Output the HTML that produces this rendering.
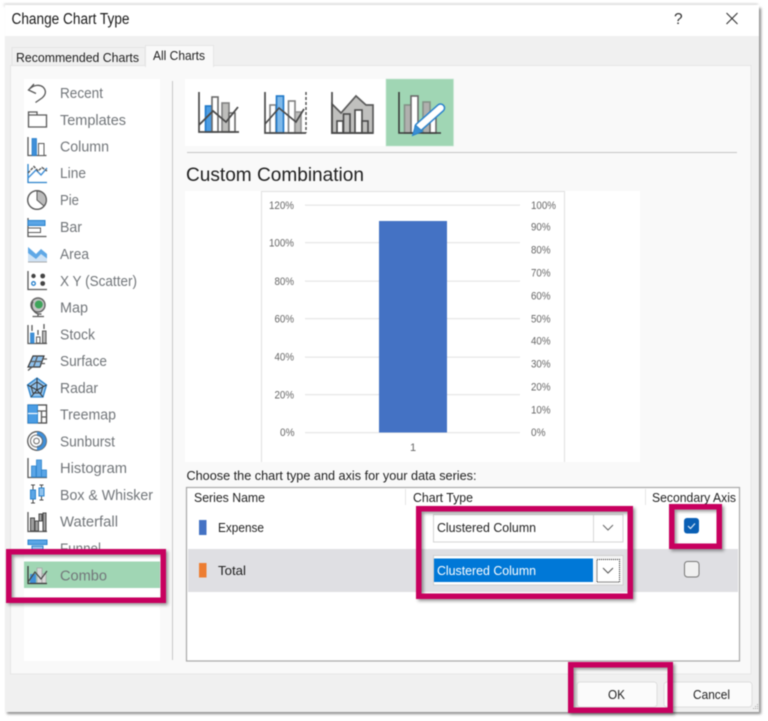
<!DOCTYPE html>
<html><head><meta charset="utf-8"><title>Change Chart Type</title>
<style>
html,body{margin:0;padding:0;background:#fff;width:768px;height:721px;overflow:hidden}
svg{display:block;filter:blur(.4px)}
text{font-family:"Liberation Sans",sans-serif}
.l{font-size:14.5px;fill:#72767a}
.a{font-size:11px;fill:#666}
.t{font-size:13px;fill:#1f1f1f}
.g{fill:none;stroke:#5a5a5a;stroke-width:1.300}
</style></head><body>
<svg width="768" height="721" viewBox="0 0 768 721" xmlns="http://www.w3.org/2000/svg">
<defs>
<filter id="ds" x="-5%" y="-5%" width="110%" height="110%"><feGaussianBlur stdDeviation="1.2"/></filter>
<filter id="ps" x="-20%" y="-20%" width="140%" height="140%"><feDropShadow dx="2" dy="2" stdDeviation="1.5" flood-color="#000" flood-opacity=".4"/></filter>
</defs>
<rect x="4" y="3" width="754" height="4" fill="#ddd" filter="url(#ds)"/>
<rect x="7" y="8" width="754" height="706" fill="#8a8a8a" filter="url(#ds)"/>
<rect x="5" y="5" width="754" height="707" fill="#f0f0f0"/>
<rect x="5" y="5" width="754" height="31" fill="#fff"/>
<text x="11.5" y="24" font-size="15.500" fill="#1a1a1a" textLength="118" lengthAdjust="spacingAndGlyphs">Change Chart Type</text>
<text x="674" y="24" font-size="15.500" fill="#333">?</text>
<path d="M726.500 13 L737.500 24 M737.500 13 L726.500 24" stroke="#333" stroke-width="1.100" fill="none"/>

<rect x="10.500" y="65.500" width="740.500" height="608.500" fill="#f9f9f9" stroke="#e6e6e6"/>
<rect x="12" y="47.500" width="133" height="18" fill="#f0f0f0" stroke="#e4e4e4"/>
<text x="16" y="62" class="t" textLength="123" lengthAdjust="spacingAndGlyphs">Recommended Charts</text>
<rect x="145.500" y="45.500" width="68" height="21" fill="#f9f9f9" stroke="#e6e6e6"/>
<rect x="146" y="64" width="67" height="3" fill="#f9f9f9"/>
<text x="153" y="60" class="t" textLength="52" lengthAdjust="spacingAndGlyphs">All Charts</text>

<rect x="24" y="79" width="136" height="582" fill="#fff"/>
<rect x="172" y="81" width="1" height="579" fill="#c8c8c8"/>
<rect x="185" y="79" width="201" height="67" fill="#fff"/>
<rect x="386" y="79" width="67.500" height="67" fill="#a0d6b4" stroke="#c6e6d2" stroke-width=".6"/>
<rect x="187" y="152" width="550" height="1" fill="#c6c6c6"/>

<!-- top icons -->
<g fill="none" stroke="#4a4a4a" stroke-width="1.600">
<rect x="205.500" y="106" width="6.500" height="26" fill="#4b9de4" stroke="#1f78c8"/>
<rect x="212" y="97" width="6" height="35" fill="#fff" stroke="#6a6a6a"/>
<rect x="222" y="103" width="7" height="29" fill="#bdbdbb" stroke="#808080"/>
<rect x="229" y="113" width="6" height="19" fill="#fff" stroke="#6a6a6a"/>
<path d="M199 92V132H239" stroke-width="1.700"/>
<path d="M199 125L213 111L226 122L238 107" stroke-width="1.800"/>

<rect x="270" y="105" width="6" height="28" fill="#fff" stroke="#808080"/>
<rect x="276.500" y="96" width="7" height="37" fill="#7fb9ea" stroke="#1f78c8"/>
<rect x="288.500" y="101" width="6.500" height="32" fill="#fff" stroke="#808080"/>
<rect x="295" y="112" width="6" height="21" fill="#bdbdbb" stroke="#909090"/>
<path d="M265 92V133H306" stroke-width="1.700"/>
<path d="M306 92V133" stroke-dasharray="3 2" stroke-width="1.400"/>
<path d="M265 124L279 108L296 122L304 109" stroke-width="1.700"/>

<path d="M332 104L341 113L356 96L366 105H373V133H332Z" fill="#c0c0be" stroke="#5a5a5a" stroke-width="1.700"/>
<rect x="337" y="121" width="6" height="12" fill="#fff" stroke="#4a4a4a"/>
<rect x="343.500" y="114" width="6.500" height="19" fill="#c0c0be" stroke="#4a4a4a"/>
<rect x="355" y="110" width="7" height="23" fill="#fff" stroke="#4a4a4a"/>
<rect x="362" y="121" width="6" height="12" fill="#c0c0be" stroke="#4a4a4a"/>
<path d="M332 92V133H373" stroke-width="1.700"/>

<rect x="404.500" y="105" width="7" height="28" fill="#b0b0ae" stroke="#849288"/>
<rect x="411" y="96" width="7" height="37" fill="#fff" stroke="#6a6a6a"/>
<rect x="423" y="102" width="7" height="31" fill="#b0b0ae" stroke="#849288"/>
<rect x="430" y="115" width="6" height="18" fill="#fff" stroke="#6a6a6a"/>
<path d="M399 92V133H441" stroke="#3a3a3a"/>
</g>
<path d="M419 127L440.500 108" stroke="#2b83cc" stroke-width="9.500" stroke-linecap="round"/>
<path d="M419 127L440.500 108" stroke="#fff" stroke-width="6.500" stroke-linecap="round"/>
<path d="M412.500 135.500L415.500 125L422.500 131.500Z" fill="#3a8fd4" stroke="#2b83cc"/>

<text x="186" y="181" font-size="19.500" fill="#1f1f1f" textLength="178" lengthAdjust="spacingAndGlyphs">Custom Combination</text>

<!-- chart -->
<rect x="185" y="191" width="455" height="271" fill="#fff"/>
<path d="M261.500 462V191.500H564.500V462" fill="none" stroke="#e0e0e0"/>
<g fill="#e6e6e6">
<rect x="305" y="204.500" width="215" height="1.200"/><rect x="305" y="242" width="215" height="1.200"/>
<rect x="305" y="280.500" width="215" height="1.200"/><rect x="305" y="318" width="215" height="1.200"/>
<rect x="305" y="356.500" width="215" height="1.200"/><rect x="305" y="394" width="215" height="1.200"/>
<rect x="305" y="432" width="215" height="1.200"/>
</g>
<rect x="379" y="221" width="68" height="211.500" fill="#4472c4"/>
<g>
<text class="a" x="269" y="209" textLength="25" lengthAdjust="spacingAndGlyphs">120%</text><text class="a" x="269" y="246.500" textLength="25" lengthAdjust="spacingAndGlyphs">100%</text>
<text class="a" x="274.500" y="285" textLength="19.500" lengthAdjust="spacingAndGlyphs">80%</text><text class="a" x="274.500" y="322.500" textLength="19.500" lengthAdjust="spacingAndGlyphs">60%</text>
<text class="a" x="274.500" y="360.500" textLength="19.500" lengthAdjust="spacingAndGlyphs">40%</text><text class="a" x="274.500" y="398.500" textLength="19.500" lengthAdjust="spacingAndGlyphs">20%</text>
<text class="a" x="280" y="436" textLength="14.500" lengthAdjust="spacingAndGlyphs">0%</text>
<text class="a" x="531" y="209" textLength="25" lengthAdjust="spacingAndGlyphs">100%</text><text class="a" x="531" y="230.500" textLength="19.500" lengthAdjust="spacingAndGlyphs">90%</text>
<text class="a" x="531" y="253.500" textLength="19.500" lengthAdjust="spacingAndGlyphs">80%</text><text class="a" x="531" y="276.500" textLength="19.500" lengthAdjust="spacingAndGlyphs">70%</text>
<text class="a" x="531" y="299.500" textLength="19.500" lengthAdjust="spacingAndGlyphs">60%</text><text class="a" x="531" y="322.500" textLength="19.500" lengthAdjust="spacingAndGlyphs">50%</text>
<text class="a" x="531" y="344.500" textLength="19.500" lengthAdjust="spacingAndGlyphs">40%</text><text class="a" x="531" y="367.500" textLength="19.500" lengthAdjust="spacingAndGlyphs">30%</text>
<text class="a" x="531" y="390.500" textLength="19.500" lengthAdjust="spacingAndGlyphs">20%</text><text class="a" x="531" y="413.500" textLength="19.500" lengthAdjust="spacingAndGlyphs">10%</text>
<text class="a" x="531" y="436" textLength="14.500" lengthAdjust="spacingAndGlyphs">0%</text>
<text class="a" x="410" y="451">1</text>
</g>

<text x="186.500" y="480" class="t" textLength="290" lengthAdjust="spacingAndGlyphs">Choose the chart type and axis for your data series:</text>

<!-- table -->
<rect x="186.500" y="487.500" width="553" height="173.500" fill="#fff" stroke="#a8a8a8" stroke-width="1.200"/>
<rect x="188" y="549" width="550" height="43" fill="#dfdfe3"/>
<rect x="405" y="489" width="1" height="16" fill="#e6e6e6"/>
<rect x="645" y="489" width="1" height="16" fill="#e6e6e6"/>
<text x="194" y="502" class="t" textLength="71" lengthAdjust="spacingAndGlyphs">Series Name</text>
<text x="413" y="502" class="t" textLength="60" lengthAdjust="spacingAndGlyphs">Chart Type</text>
<text x="652" y="502" class="t" textLength="84" lengthAdjust="spacingAndGlyphs">Secondary Axis</text>
<rect x="199" y="520" width="7.500" height="15" fill="#4472c4"/>
<rect x="199" y="563" width="7.500" height="14.500" fill="#ed7d31"/>
<text x="218" y="532" class="t" textLength="46" lengthAdjust="spacingAndGlyphs">Expense</text>
<text x="218" y="575" class="t" textLength="28" lengthAdjust="spacingAndGlyphs">Total</text>

<rect x="433.500" y="514.500" width="189.500" height="27.500" fill="#fff" stroke="#d4d4d4"/>
<rect x="593" y="515" width="1" height="27" fill="#d8d8d8"/>
<path d="M603 525L608 530L613 525" fill="none" stroke="#666"/>
<text x="437" y="532" class="t" textLength="99" lengthAdjust="spacingAndGlyphs">Clustered Column</text>

<rect x="433.500" y="555.500" width="189.500" height="29.500" fill="#fff" stroke="#cfcfcf"/>
<rect x="434" y="558.500" width="159" height="23.500" fill="#0078d7"/>
<rect x="594" y="556" width="28" height="28" fill="#f4f4f4"/>
<rect x="597" y="559.500" width="22.500" height="22.500" fill="#fff" stroke="#222" stroke-dasharray="1 1"/>
<path d="M603 568L608 573L613 568" fill="none" stroke="#555"/>
<text x="437" y="575" class="t" style="fill:#fff" textLength="99" lengthAdjust="spacingAndGlyphs">Clustered Column</text>

<rect x="684" y="518" width="15" height="15.500" rx="3" fill="#0a5fb4"/>
<path d="M688 526L690.500 528.500L695 523.500" fill="none" stroke="#dbe9f7" stroke-width="1.200"/>
<rect x="684.500" y="561.500" width="14.500" height="15.500" rx="3" fill="#f0f0f0" stroke="#777"/>

<!-- buttons -->
<rect x="577" y="682" width="80" height="25" rx="3" fill="#fbfbfb" stroke="#dedede"/>
<text x="608" y="699" class="t" textLength="17" lengthAdjust="spacingAndGlyphs">OK</text>
<rect x="664" y="682" width="88" height="25" rx="3" fill="#fbfbfb" stroke="#dedede"/>
<text x="693" y="699" class="t" textLength="37" lengthAdjust="spacingAndGlyphs">Cancel</text>
<g fill="#aaa"><rect x="757" y="704" width="1" height="1"/><rect x="755" y="706" width="1" height="1"/><rect x="757" y="706" width="1" height="1"/><rect x="753" y="708" width="1" height="1"/><rect x="755" y="708" width="1" height="1"/><rect x="757" y="708" width="1" height="1"/></g>

<!-- left list icons -->
<path d="M34 84L28.500 90L36 93.500M28.500 90C33 85 39 84 43 87C47 91 45.500 95 42 98L35.500 102.500" class="g"/>
<path d="M28.500 115V112H37V115M28.500 115H46.500V127H28.500Z" class="g"/>
<path d="M28 137V155.500H46.500" class="g"/><rect x="32" y="138.500" width="4.500" height="17" fill="#3f8fd8" stroke="#1f78c8" stroke-width=".7"/><rect x="38.500" y="143.500" width="5.500" height="12" fill="#fff" stroke="#5a5a5a"/>
<path d="M28 164V182.500H47" class="g" style="stroke:#2b83cc"/><path d="M28 178L36 170L41 175L47 168" fill="none" stroke="#3f8fd8" stroke-width="1.400"/><path d="M28 173L34 166.500L38 171L42 167.500L47 171" fill="none" stroke="#5a5a5a" stroke-width="1.400" stroke-dasharray="3 1"/>
<circle cx="37" cy="200" r="9.300" fill="#fff" stroke="#5a5a5a" stroke-width="1.400"/><path d="M37 200V191A9 9 0 0 1 44 206Z" fill="#bcbcbc" stroke="#5a5a5a"/>
<path d="M28 218V236.500H46.500" class="g"/><rect x="28" y="220.500" width="17" height="5" fill="#5aa5e6" stroke="#2b83cc"/><rect x="28" y="228" width="12.500" height="4.500" fill="#fff" stroke="#5a5a5a"/>
<path d="M28 247L36 254L41 249L47 254V262H28Z" fill="#cfe3f5"/><path d="M28 247L36 254L41 249L47 254V258.500L41 254L36 259L28 253Z" fill="#5fa8e6"/><rect x="28" y="261.500" width="19" height="1" fill="#aaa"/>
<path d="M28 271V289.500H47" class="g"/><circle cx="33.500" cy="276" r="2.200" fill="#444"/><circle cx="42.700" cy="276" r="2.400" fill="#444"/><circle cx="33.500" cy="283.500" r="1.800" fill="#fff" stroke="#2b83cc" stroke-width="1.300"/><circle cx="42.700" cy="283.500" r="2.400" fill="#444"/>
<circle cx="38" cy="305" r="7" fill="#c4c4c4" stroke="#666" stroke-width="1.400"/><circle cx="38.800" cy="304.500" r="4" fill="#3ea45a"/><path d="M33 301.500A8.500 8.500 0 0 0 41.500 314M38 314V316M32.500 316.500H44" class="g"/>
<path d="M28 325V343.500H47" class="g"/><rect x="30.500" y="333" width="3.500" height="10" fill="#3f8fd8" stroke="#2b83cc" stroke-width=".7"/><rect x="36.500" y="337" width="3.500" height="6" fill="#fff" stroke="#5a5a5a"/><rect x="42.500" y="331" width="3.500" height="12" fill="#bcbcbc" stroke="#5a5a5a"/><path d="M32 325V331M38 330V335M44 324V329" class="g"/>
<path d="M33 356H44L40 367H28Z" fill="#8fc2ee" stroke="#3a3a3a" stroke-width="1.200"/><path d="M31 361.500H42M37.500 356L33.500 367M47 359H42M45 363.500H40M28 370.500L32 367" class="g"/>
<path d="M37 378L46.500 385L43 397H31L27.500 385Z" fill="#8fc2ee" stroke="#2b83cc" stroke-width="1.300"/><path d="M37 378V390M46.500 385L37 390M43 397L37 390M31 397L37 390M27.500 385L37 390M31 386L37 382L43 386L41 393H33Z" fill="none" stroke="#3a3a3a" stroke-width="1"/>
<rect x="28" y="405" width="18.500" height="18" fill="#fff" stroke="#4a4a4a" stroke-width="1.300"/><rect x="28" y="405" width="9.500" height="18" fill="#4b9de4" stroke="#2b83cc"/><path d="M28 413.500H37.500" stroke="#fff" stroke-width="1.200"/><path d="M37.500 411H46.500M41.500 411V423M41.500 417H46.500" class="g"/>
<circle cx="37" cy="441" r="9.300" fill="#fff" stroke="#5a5a5a" stroke-width="1.300"/><path d="M37 431.700A9.300 9.300 0 0 1 37 450.300V446A5 5 0 0 0 37 436Z" fill="#3f8fd8"/><circle cx="36.500" cy="441" r="6" fill="none" stroke="#6a6a6a"/><circle cx="36.500" cy="441" r="2.800" fill="#fff" stroke="#6a6a6a"/>
<path d="M28 458V477.500H47" class="g"/><rect x="31.500" y="466" width="4.500" height="11" fill="#5aa5e6" stroke="#2b83cc" stroke-width=".8"/><rect x="36.500" y="460" width="5" height="17" fill="#5aa5e6" stroke="#2b83cc" stroke-width=".8"/><rect x="41.500" y="470" width="5" height="7" fill="#5aa5e6" stroke="#2b83cc" stroke-width=".8"/>
<path d="M33 485V503M41.500 485V500M31 485H35M31 503H35M39.500 485H43.500M39.500 500H43.500" stroke="#4a4a4a" fill="none"/><rect x="30.500" y="490" width="5" height="9" fill="#5aa5e6" stroke="#2b83cc"/><rect x="39" y="488" width="5" height="8" fill="#8fc2ee" stroke="#2b83cc"/>
<path d="M28 512V531.500H47" class="g"/><rect x="30.500" y="518" width="4" height="13" fill="#a0a0a0" stroke="#4a4a4a"/><rect x="35" y="521" width="3.500" height="10" fill="#a0a0a0" stroke="#4a4a4a"/><rect x="39" y="514" width="3" height="7" fill="#a0a0a0" stroke="#4a4a4a"/><rect x="43" y="513" width="3" height="18" fill="#a0a0a0" stroke="#4a4a4a"/>
<rect x="28" y="540" width="19" height="4.500" fill="#5aa5e6" stroke="#2b83cc"/><rect x="32" y="546" width="11" height="5" fill="#8fc2ee" stroke="#2b83cc"/>

<g>
<text class="l" x="60" y="98" textLength="43" lengthAdjust="spacingAndGlyphs">Recent</text>
<text class="l" x="60" y="125" textLength="66" lengthAdjust="spacingAndGlyphs">Templates</text>
<text class="l" x="60" y="151.500" textLength="49" lengthAdjust="spacingAndGlyphs">Column</text>
<text class="l" x="60" y="178" textLength="26" lengthAdjust="spacingAndGlyphs">Line</text>
<text class="l" x="60" y="205" textLength="19" lengthAdjust="spacingAndGlyphs">Pie</text>
<text class="l" x="60" y="232" textLength="22" lengthAdjust="spacingAndGlyphs">Bar</text>
<text class="l" x="60" y="259" textLength="29" lengthAdjust="spacingAndGlyphs">Area</text>
<text class="l" x="60" y="286" textLength="77" lengthAdjust="spacingAndGlyphs">X Y (Scatter)</text>
<text class="l" x="60" y="312.500" textLength="28" lengthAdjust="spacingAndGlyphs">Map</text>
<text class="l" x="60" y="339.500" textLength="35" lengthAdjust="spacingAndGlyphs">Stock</text>
<text class="l" x="60" y="366" textLength="47" lengthAdjust="spacingAndGlyphs">Surface</text>
<text class="l" x="60" y="393" textLength="38" lengthAdjust="spacingAndGlyphs">Radar</text>
<text class="l" x="60" y="419.500" textLength="56" lengthAdjust="spacingAndGlyphs">Treemap</text>
<text class="l" x="60" y="446.500" textLength="55" lengthAdjust="spacingAndGlyphs">Sunburst</text>
<text class="l" x="60" y="473" textLength="67" lengthAdjust="spacingAndGlyphs">Histogram</text>
<text class="l" x="60" y="500" textLength="93" lengthAdjust="spacingAndGlyphs">Box &amp; Whisker</text>
<text class="l" x="60" y="526.500" textLength="58" lengthAdjust="spacingAndGlyphs">Waterfall</text>
<text class="l" x="60" y="553.500" textLength="41" lengthAdjust="spacingAndGlyphs">Funnel</text>
</g>

<!-- combo row -->
<rect x="11" y="555" width="149" height="43" fill="#fff"/>
<rect x="11" y="555" width="13" height="43" fill="#f9f9f9"/>
<rect x="24" y="561.500" width="136" height="26.500" fill="#a0d6b4"/>
<rect x="30" y="574" width="6" height="9" fill="#3f8fd8"/><rect x="37" y="568" width="5" height="15" fill="#d8d8d8" stroke="#999" stroke-width=".6"/><rect x="42" y="574" width="4" height="9" fill="#d8d8d8" stroke="#999" stroke-width=".6"/>
<path d="M28 566V583.500H47" fill="none" stroke="#3a3a3a" stroke-width="1.300"/><path d="M28 582L35 572L41 579L47 571" fill="none" stroke="#4a4a4a" stroke-width="1.300"/>
<text class="l" x="60" y="580.500" textLength="47" lengthAdjust="spacingAndGlyphs">Combo</text>

<!-- pink frames -->
<g fill="none" stroke="#c8005f" stroke-width="5.500" filter="url(#ps)">
<rect x="8.750" y="551.750" width="154.500" height="48.500"/>
<rect x="418.750" y="508.750" width="211.500" height="87.500"/>
<rect x="671.750" y="506.750" width="47.500" height="39.500"/>
<rect x="570.750" y="664.750" width="99.500" height="45.500"/>
</g>
</svg>
</body></html>
